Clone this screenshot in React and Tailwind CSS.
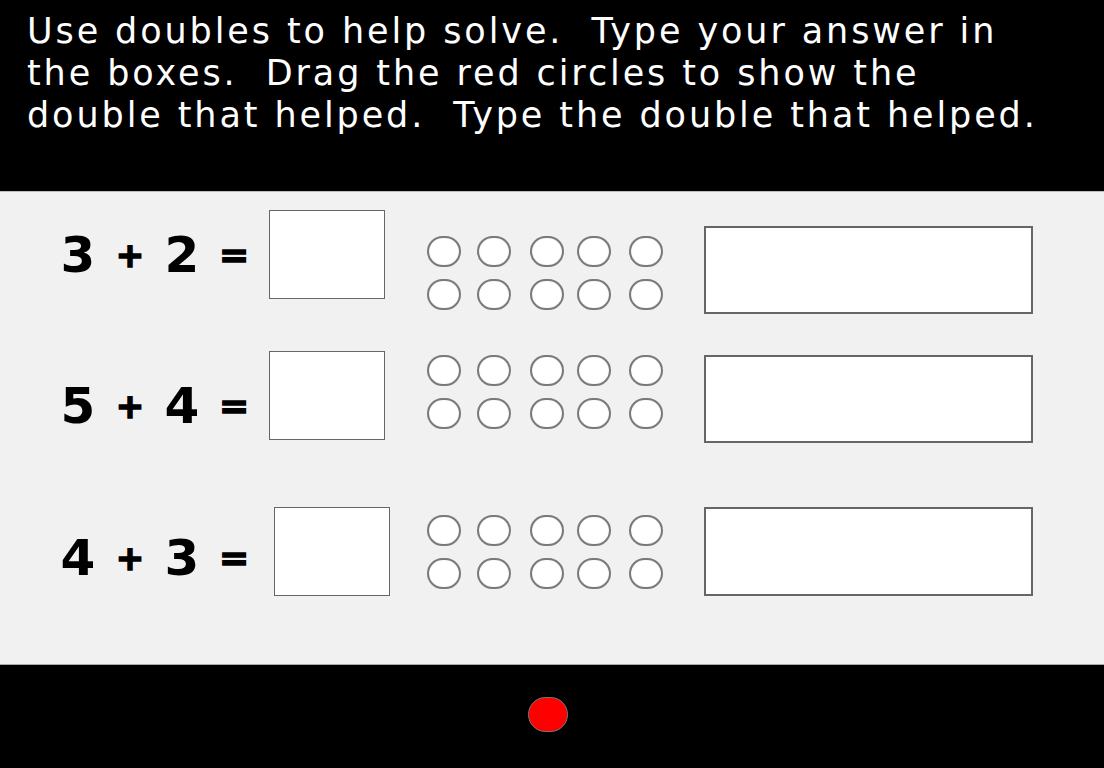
import React from "react";

const circleMl = ["", "ml-[16px]", "ml-[19px]", "ml-[13px]", "ml-[18px]"];

function Circle({ ml }) {
  return (
    <div
      className={`w-[34px] h-[31px] rounded-full bg-white border-2 border-[#7a7a7a] shadow-[inset_0_0_1px_rgba(0,0,0,0.3)] shrink-0 ${ml}`}
    />
  );
}

function CircleGrid() {
  return (
    <div className="flex flex-col gap-[12px]">
      {[0, 1].map((r) => (
        <div key={r} className="flex">
          {circleMl.map((m, i) => (
            <Circle key={i} ml={m} />
          ))}
        </div>
      ))}
    </div>
  );
}

function Equation({ a, b }) {
  const cell = "w-[52px] text-center leading-none";
  return (
    <div
      className="flex items-center text-black font-bold ml-[52px] shrink-0"
      style={{ fontFamily: '"DejaVu Sans", "Open Sans", sans-serif' }}
    >
      <span className={`${cell} text-[50px]`}>{a}</span>
      <span className={`${cell} text-[34px] [-webkit-text-stroke:1.5px_black]`}>+</span>
      <span className={`${cell} text-[50px]`}>{b}</span>
      <span className={`${cell} text-[36px] [-webkit-text-stroke:1.5px_black]`}>=</span>
    </div>
  );
}

export default function App() {
  return (
    <div className="w-[1104px] h-[768px] bg-black flex flex-col overflow-hidden">
      <div
        className="h-[191px] shrink-0 pl-[27px] pt-[10px] text-white text-[35px] leading-[42px] tracking-[2.9px]"
        style={{ fontFamily: '"DejaVu Sans", "Open Sans", sans-serif' }}
      >
        <div className="whitespace-pre">Use doubles to help solve.  Type your answer in</div>
        <div className="whitespace-pre">the boxes.  Drag the red circles to show the</div>
        <div className="whitespace-pre">double that helped.  Type the double that helped.</div>
      </div>

      <div className="h-[474px] shrink-0 bg-[#f1f1f1] border-t border-[#bdbdbd] border-b border-b-[#a9a9a9] flex flex-col">
        {/* Row 1 */}
        <div className="flex items-start mt-[18px]">
          <div className="mt-[20px]">
            <Equation a="3" b="2" />
          </div>
          <div className="ml-[9px] w-[116px] h-[89px] bg-white border-[1.5px] border-[#666] shrink-0" />
          <div className="ml-[42px] mt-[26px]">
            <CircleGrid />
          </div>
          <div className="ml-[41px] mt-[16px] w-[329px] h-[88px] bg-white border-2 border-[#666] shrink-0" />
        </div>

        {/* Row 2 */}
        <div className="flex items-start mt-[37px]">
          <div className="mt-[30px]">
            <Equation a="5" b="4" />
          </div>
          <div className="ml-[9px] w-[116px] h-[89px] bg-white border-[1.5px] border-[#666] shrink-0" />
          <div className="ml-[42px] mt-[4px]">
            <CircleGrid />
          </div>
          <div className="ml-[41px] mt-[4px] w-[329px] h-[88px] bg-white border-2 border-[#666] shrink-0" />
        </div>

        {/* Row 3 */}
        <div className="flex items-start mt-[64px]">
          <div className="mt-[26px]">
            <Equation a="4" b="3" />
          </div>
          <div className="ml-[14px] w-[116px] h-[89px] bg-white border-[1.5px] border-[#666] shrink-0" />
          <div className="ml-[37px] mt-[8px]">
            <CircleGrid />
          </div>
          <div className="ml-[41px] w-[329px] h-[89px] bg-white border-2 border-[#666] shrink-0" />
        </div>
      </div>

      <div className="flex-1 flex justify-center pt-[32px]">
        <div className="w-[40px] h-[35px] rounded-full bg-[#ff0000] border border-[#777] ml-[-8px]" />
      </div>
    </div>
  );
}
